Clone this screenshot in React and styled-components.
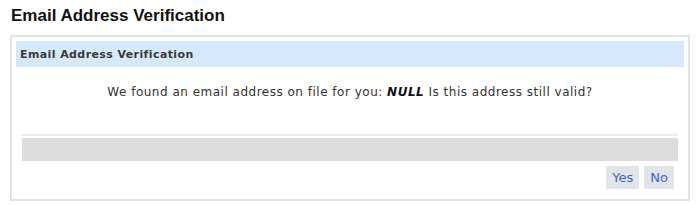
import React from 'react';
import styled, {createGlobalStyle} from 'styled-components';

const GlobalStyle = createGlobalStyle`
    body {
        margin: 0;
        background: #fff;
        font-family: "DejaVu Sans", Verdana, sans-serif;
    }
`

function App(){
    return(
    <Page>
        <GlobalStyle/>
        <PageTitle>Email Address Verification</PageTitle>
        <Panel>
            <PanelHeader>Email Address Verification</PanelHeader>
            <Message>
                We found an email address on file for you: <Null>NULL</Null> Is this address still valid?
            </Message>
            <Footer>
                <Divider/>
                <GrayBar/>
                <Actions>
                    <ActionButton>Yes</ActionButton>
                    <ActionButton>No</ActionButton>
                </Actions>
            </Footer>
        </Panel>
    </Page>
    )
}

export default App;

const Page = styled.div`
    width: 696px;
    height: 205px;
    padding-top: 6px;
    box-sizing: border-box;
`

const PageTitle = styled.h1`
    margin: 0 0 9px 11px;
    font-family: "Liberation Sans", Arial, sans-serif;
    font-size: 17px;
    font-weight: bold;
    color: #111;
    line-height: 20px;
`

const Panel = styled.div`
    margin: 0 6px 0 10px;
    border: 2px solid #e2e2e2;
    padding: 4px 4px 8px 4px;
    box-sizing: border-box;
    height: 166px;
    display: flex;
    flex-direction: column;
`

const PanelHeader = styled.div`
    background: #d6e9fc;
    height: 26px;
    display: flex;
    align-items: center;
    padding-left: 4px;
    font-size: 11px;
    letter-spacing: 0.4px;
    font-weight: bold;
    color: #3a3a3a;
`

const Message = styled.div`
    text-align: center;
    font-size: 12px;
    letter-spacing: 0.5px;
    color: #333;
    padding-top: 18px;
    height: 49px;
`

const Null = styled.b`
    font-style: italic;
    color: #111;
`

const Footer = styled.div`
    padding: 0 6px;
    display: flex;
    flex-direction: column;
`

const Divider = styled.div`
    height: 2px;
    background: #ececec;
    margin-bottom: 2px;
`

const GrayBar = styled.div`
    height: 23px;
    background: #dcdcdc;
`

const Actions = styled.div`
    display: flex;
    justify-content: flex-end;
    gap: 5px;
    margin: 5px 4px 0 0;
`

const ActionButton = styled.button`
    height: 23px;
    padding: 0 6px;
    border: none;
    background: #e3e3ea;
    color: #3a67c8;
    font-family: "DejaVu Sans", Verdana, sans-serif;
    font-size: 13px;
    cursor: pointer;
`
